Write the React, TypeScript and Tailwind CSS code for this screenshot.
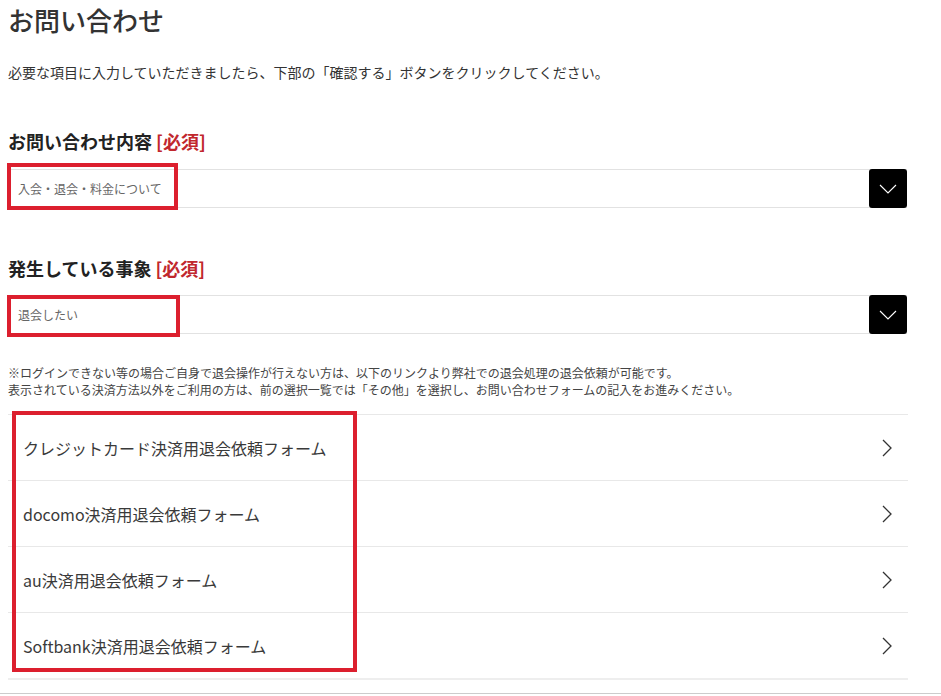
import React from "react";

const FONT = { fontFamily: '"Noto Sans CJK JP", "Noto Sans", sans-serif' };

function DownChevron() {
  return (
    <svg width="18" height="10" viewBox="0 0 18 10" fill="none">
      <path d="M1 1 L9 9 L17 1" stroke="#ffffff" strokeWidth="1.1" />
    </svg>
  );
}

function RightChevron() {
  return (
    <svg width="10" height="18" viewBox="0 0 10 18" fill="none">
      <path d="M1 1 L9 9 L1 17" stroke="#333333" strokeWidth="1.3" />
    </svg>
  );
}

function SelectBox({ value }: { value: string }) {
  return (
    <div className="flex h-[39px] w-[899px] items-stretch border-y border-[#e2e2e2]">
      <div className="flex flex-1 items-center pl-[10px] text-[12px] text-[#666666]">{value}</div>
      <div className="-my-px flex w-[38px] items-center justify-center rounded-[3px] bg-black">
        <DownChevron />
      </div>
    </div>
  );
}

function Heading({ text }: { text: string }) {
  return (
    <h2 className="text-[18px] font-bold leading-[26px] text-[#222222]">
      {text} <span className="text-[#c1272d]">[必須]</span>
    </h2>
  );
}

const links = [
  "クレジットカード決済用退会依頼フォーム",
  "docomo決済用退会依頼フォーム",
  "au決済用退会依頼フォーム",
  "Softbank決済用退会依頼フォーム",
];

export default function App() {
  return (
    <div className="relative h-[696px] w-[941px] overflow-hidden bg-white" style={FONT}>
      <div className="flex flex-col pl-[8px]">
        <h1 className="mt-[2px] text-[26px] font-medium leading-[36px] text-[#333333]">お問い合わせ</h1>
        <p className="mt-[24px] text-[14px] leading-[20px] text-[#333333]">
          必要な項目に入力していただきましたら、下部の「確認する」ボタンをクリックしてください。
        </p>
        <div className="mt-[46px]">
          <Heading text="お問い合わせ内容" />
        </div>
        <div className="mt-[15px]">
          <SelectBox value="入会・退会・料金について" />
        </div>
        <div className="mt-[47px]">
          <Heading text="発生している事象" />
        </div>
        <div className="mt-[14px]">
          <SelectBox value="退会したい" />
        </div>
        <div className="mt-[30px] text-[12px] leading-[17px] text-[#444444]">
          <p>※ログインできない等の場合ご自身で退会操作が行えない方は、以下のリンクより弊社での退会処理の退会依頼が可能です。</p>
          <p>表示されている決済方法以外をご利用の方は、前の選択一覧では「その他」を選択し、お問い合わせフォームの記入をお進みください。</p>
        </div>
        <ul className="mt-[16px] w-[900px] border-b-2 border-[#eeeeee]">
          {links.map((l) => (
            <li
              key={l}
              className="flex h-[66px] items-center justify-between border-t border-[#e8e8e8] pl-[15px] pr-[16px] text-[16px] text-[#3a3a3a]"
            >
              <span>{l}</span>
              <RightChevron />
            </li>
          ))}
        </ul>
        <div className="-ml-[8px] mt-[13px] h-px w-[941px] bg-[#cccccc]" />
      </div>

      <div className="pointer-events-none absolute left-[7px] top-[163px] h-[47px] w-[171px] border-4 border-[#dc1f2e]" />
      <div className="pointer-events-none absolute left-[7px] top-[295px] h-[42px] w-[173px] border-4 border-[#dc1f2e]" />
      <div className="pointer-events-none absolute left-[12px] top-[411px] h-[261px] w-[345px] border-4 border-[#dc1f2e]" />
    </div>
  );
}
